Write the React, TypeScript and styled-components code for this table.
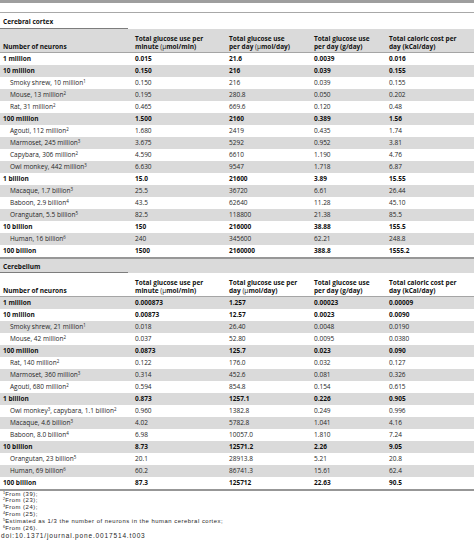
import React from 'react'
import styled, { createGlobalStyle } from 'styled-components'

const GlobalStyle = createGlobalStyle`
    html, body {
        margin: 0;
        padding: 0;
        background: #fff;
    }
    body {
        font-family: 'Open Sans', 'Liberation Sans', sans-serif;
        color: #333;
    }
`

const Page = styled.div`
    width: 474px;
    height: 549px;
    overflow: hidden;
`

const TopBar = styled.div`
    height: 3px;
    background: #9e9e9e;
`

const TopGap = styled.div`
    height: 9px;
    border-bottom: 1px solid #a8a8a8;
`

const Table = styled.table`
    width: 474px;
    border-collapse: collapse;
    table-layout: fixed;
    font-size: 6.5px;
`

const SectionBody = styled.tbody<{ $divider?: boolean }>`
    border-top: ${(p) => (p.$divider ? '2px solid #979797' : 'none')};
`

const Row = styled.tr<{ $shade?: boolean }>`
    background: ${(p) => (p.$shade ? '#dadada' : '#fff')};
`

const TitleCell = styled.td<{ $h: number }>`
    height: ${(p) => p.$h}px;
    padding: 0;
    vertical-align: bottom;
`

const TitleLabel = styled.div<{ $h: number }>`
    width: 128px;
    height: ${(p) => p.$h}px;
    box-sizing: border-box;
    padding: 1px 0 0 3px;
    border-bottom: 1px solid #7d7d7d;
    font-weight: 700;
    color: #111;
    display: flex;
    align-items: center;
`

const HeadCell = styled.th`
    height: 22px;
    padding: 0 0 1px 3px;
    text-align: left;
    vertical-align: bottom;
    font-weight: 700;
    color: #111;
    line-height: 8px;
    border-bottom: 1px solid #a5a5a5;
    white-space: nowrap;
`

const Unit = styled.span`
    font-weight: 400;
`

const Cell = styled.td<{ $bold?: boolean; $indent?: boolean }>`
    height: 12px;
    padding: 0 0 0 ${(p) => (p.$indent ? 10 : 3)}px;
    font-weight: ${(p) => (p.$bold ? 700 : 400)};
    color: ${(p) => (p.$bold ? '#111' : '#262626')};
    line-height: 12px;
    white-space: nowrap;
    overflow: hidden;

    sup {
        font-size: 4.4px;
        line-height: 0;
        vertical-align: 2.5px;
    }
`

const BottomRule = styled.div`
    height: 2px;
    background: #979797;
`

const Notes = styled.div`
    padding: 0 0 0 3px;
    margin-top: -0.5px;
    font-family: 'Liberation Sans', Arial, sans-serif;
    font-size: 5.9px;
    line-height: 6.95px;
    letter-spacing: 0.52px;
    color: #262626;
    white-space: nowrap;

    sup {
        font-size: 3.8px;
        line-height: 0;
        letter-spacing: 0;
        vertical-align: 2px;
    }
`

const Doi = styled.div`
    margin-left: -2px;
    font-size: 6.5px;
    line-height: 7.4px;
    letter-spacing: 0.85px;
`

type DataRow = {
    label: React.ReactNode
    values: string[]
    bold?: boolean
}

const S = ({ n }: { n: number }) => <sup>{n}</sup>

const cortexRows: DataRow[] = [
    { label: '1 million', values: ['0.015', '21.6', '0.0039', '0.016'], bold: true },
    { label: '10 million', values: ['0.150', '216', '0.039', '0.155'], bold: true },
    { label: <>Smoky shrew, 10 million<S n={1} /></>, values: ['0.150', '216', '0.039', '0.155'] },
    { label: <>Mouse, 13 million<S n={2} /></>, values: ['0.195', '280.8', '0.050', '0.202'] },
    { label: <>Rat, 31 million<S n={2} /></>, values: ['0.465', '669.6', '0.120', '0.48'] },
    { label: '100 million', values: ['1.500', '2160', '0.389', '1.56'], bold: true },
    { label: <>Agouti, 112 million<S n={2} /></>, values: ['1.680', '2419', '0.435', '1.74'] },
    { label: <>Marmoset, 245 million<S n={3} /></>, values: ['3.675', '5292', '0.952', '3.81'] },
    { label: <>Capybara, 306 million<S n={2} /></>, values: ['4.590', '6610', '1.190', '4.76'] },
    { label: <>Owl monkey, 442 million<S n={3} /></>, values: ['6.630', '9547', '1.718', '6.87'] },
    { label: '1 billion', values: ['15.0', '21600', '3.89', '15.55'], bold: true },
    { label: <>Macaque, 1.7 billion<S n={3} /></>, values: ['25.5', '36720', '6.61', '26.44'] },
    { label: <>Baboon, 2.9 billion<S n={4} /></>, values: ['43.5', '62640', '11.28', '45.10'] },
    { label: <>Orangutan, 5.5 billion<S n={5} /></>, values: ['82.5', '118800', '21.38', '85.5'] },
    { label: '10 billion', values: ['150', '216000', '38.88', '155.5'], bold: true },
    { label: <>Human, 16 billion<S n={6} /></>, values: ['240', '345600', '62.21', '248.8'] },
    { label: '100 billion', values: ['1500', '2160000', '388.8', '1555.2'], bold: true },
]

const cerebellumRows: DataRow[] = [
    { label: '1 million', values: ['0.000873', '1.257', '0.00023', '0.00009'], bold: true },
    { label: '10 million', values: ['0.00873', '12.57', '0.0023', '0.0090'], bold: true },
    { label: <>Smoky shrew, 21 million<S n={1} /></>, values: ['0.018', '26.40', '0.0048', '0.0190'] },
    { label: <>Mouse, 42 million<S n={2} /></>, values: ['0.037', '52.80', '0.0095', '0.0380'] },
    { label: '100 million', values: ['0.0873', '125.7', '0.023', '0.090'], bold: true },
    { label: <>Rat, 140 million<S n={2} /></>, values: ['0.122', '176.0', '0.032', '0.127'] },
    { label: <>Marmoset, 360 million<S n={3} /></>, values: ['0.314', '452.6', '0.081', '0.326'] },
    { label: <>Agouti, 680 million<S n={2} /></>, values: ['0.594', '854.8', '0.154', '0.615'] },
    { label: '1 billion', values: ['0.873', '1257.1', '0.226', '0.905'], bold: true },
    {
        label: <>Owl monkey<S n={3} />, capybara, 1.1 billion<S n={2} /></>,
        values: ['0.960', '1382.8', '0.249', '0.996'],
    },
    { label: <>Macaque, 4.6 billion<S n={3} /></>, values: ['4.02', '5782.8', '1.041', '4.16'] },
    { label: <>Baboon, 8.0 billion<S n={4} /></>, values: ['6.98', '10057.0', '1.810', '7.24'] },
    { label: '10 billion', values: ['8.73', '12571.2', '2.26', '9.05'], bold: true },
    { label: <>Orangutan, 23 billion<S n={5} /></>, values: ['20.1', '28913.8', '5.21', '20.8'] },
    { label: <>Human, 69 billion<S n={6} /></>, values: ['60.2', '86741.3', '15.61', '62.4'] },
    { label: '100 billion', values: ['87.3', '125712', '22.63', '90.5'], bold: true },
]

interface SectionProps {
    title: string
    rows: DataRow[]
    titleHeight: number
    dayHeader: React.ReactNode
    // cortex starts its stripes on the header, cerebellum on the title
    shadeTitle?: boolean
    divider?: boolean
}

function Section({ title, rows, titleHeight, dayHeader, shadeTitle, divider }: SectionProps) {
    return (
        <SectionBody $divider={divider}>
            <Row $shade={shadeTitle}>
                <TitleCell $h={titleHeight}>
                    <TitleLabel $h={titleHeight}>{title}</TitleLabel>
                </TitleCell>
                <TitleCell $h={titleHeight} colSpan={4} />
            </Row>
            <Row $shade={!shadeTitle}>
                <HeadCell>Number of neurons</HeadCell>
                <HeadCell>
                    Total glucose use per
                    <br />
                    minute <Unit>(μ</Unit>mol/min)
                </HeadCell>
                <HeadCell>{dayHeader}</HeadCell>
                <HeadCell>
                    Total glucose use
                    <br />
                    per day (g/day)
                </HeadCell>
                <HeadCell>
                    Total caloric cost per
                    <br />
                    day (kCal/day)
                </HeadCell>
            </Row>
            {rows.map((r, i) => (
                <Row key={i} $shade={shadeTitle ? i % 2 === 0 : i % 2 === 1}>
                    <Cell $bold={r.bold} $indent={!r.bold}>
                        {r.label}
                    </Cell>
                    {r.values.map((v, j) => (
                        <Cell key={j} $bold={r.bold}>
                            {v}
                        </Cell>
                    ))}
                </Row>
            ))}
        </SectionBody>
    )
}

export default function App() {
    return (
        <Page>
            <GlobalStyle />
            <TopBar />
            <TopGap />
            <Table>
                <colgroup>
                    <col style={{ width: 132 }} />
                    <col style={{ width: 94 }} />
                    <col style={{ width: 85 }} />
                    <col style={{ width: 75 }} />
                    <col style={{ width: 88 }} />
                </colgroup>
                <Section
                    title="Cerebral cortex"
                    rows={cortexRows}
                    titleHeight={16}
                    dayHeader={
                        <>
                            Total glucose use
                            <br />
                            per day <Unit>(μ</Unit>mol/day)
                        </>
                    }
                />
                <Section
                    title="Cerebellum"
                    rows={cerebellumRows}
                    titleHeight={14}
                    shadeTitle
                    divider
                    dayHeader={
                        <>
                            Total glucose use per
                            <br />
                            day <Unit>(μ</Unit>mol/day)
                        </>
                    }
                />
            </Table>
            <BottomRule />
            <Notes>
                <div><sup>1</sup>From (39);</div>
                <div><sup>2</sup>From (23);</div>
                <div><sup>3</sup>From (24);</div>
                <div><sup>4</sup>From (25);</div>
                <div><sup>5</sup>Estimated as 1/3 the number of neurons in the human cerebral cortex;</div>
                <div><sup>6</sup>From (26).</div>
                <Doi>doi:10.1371/journal.pone.0017514.t003</Doi>
            </Notes>
        </Page>
    )
}
